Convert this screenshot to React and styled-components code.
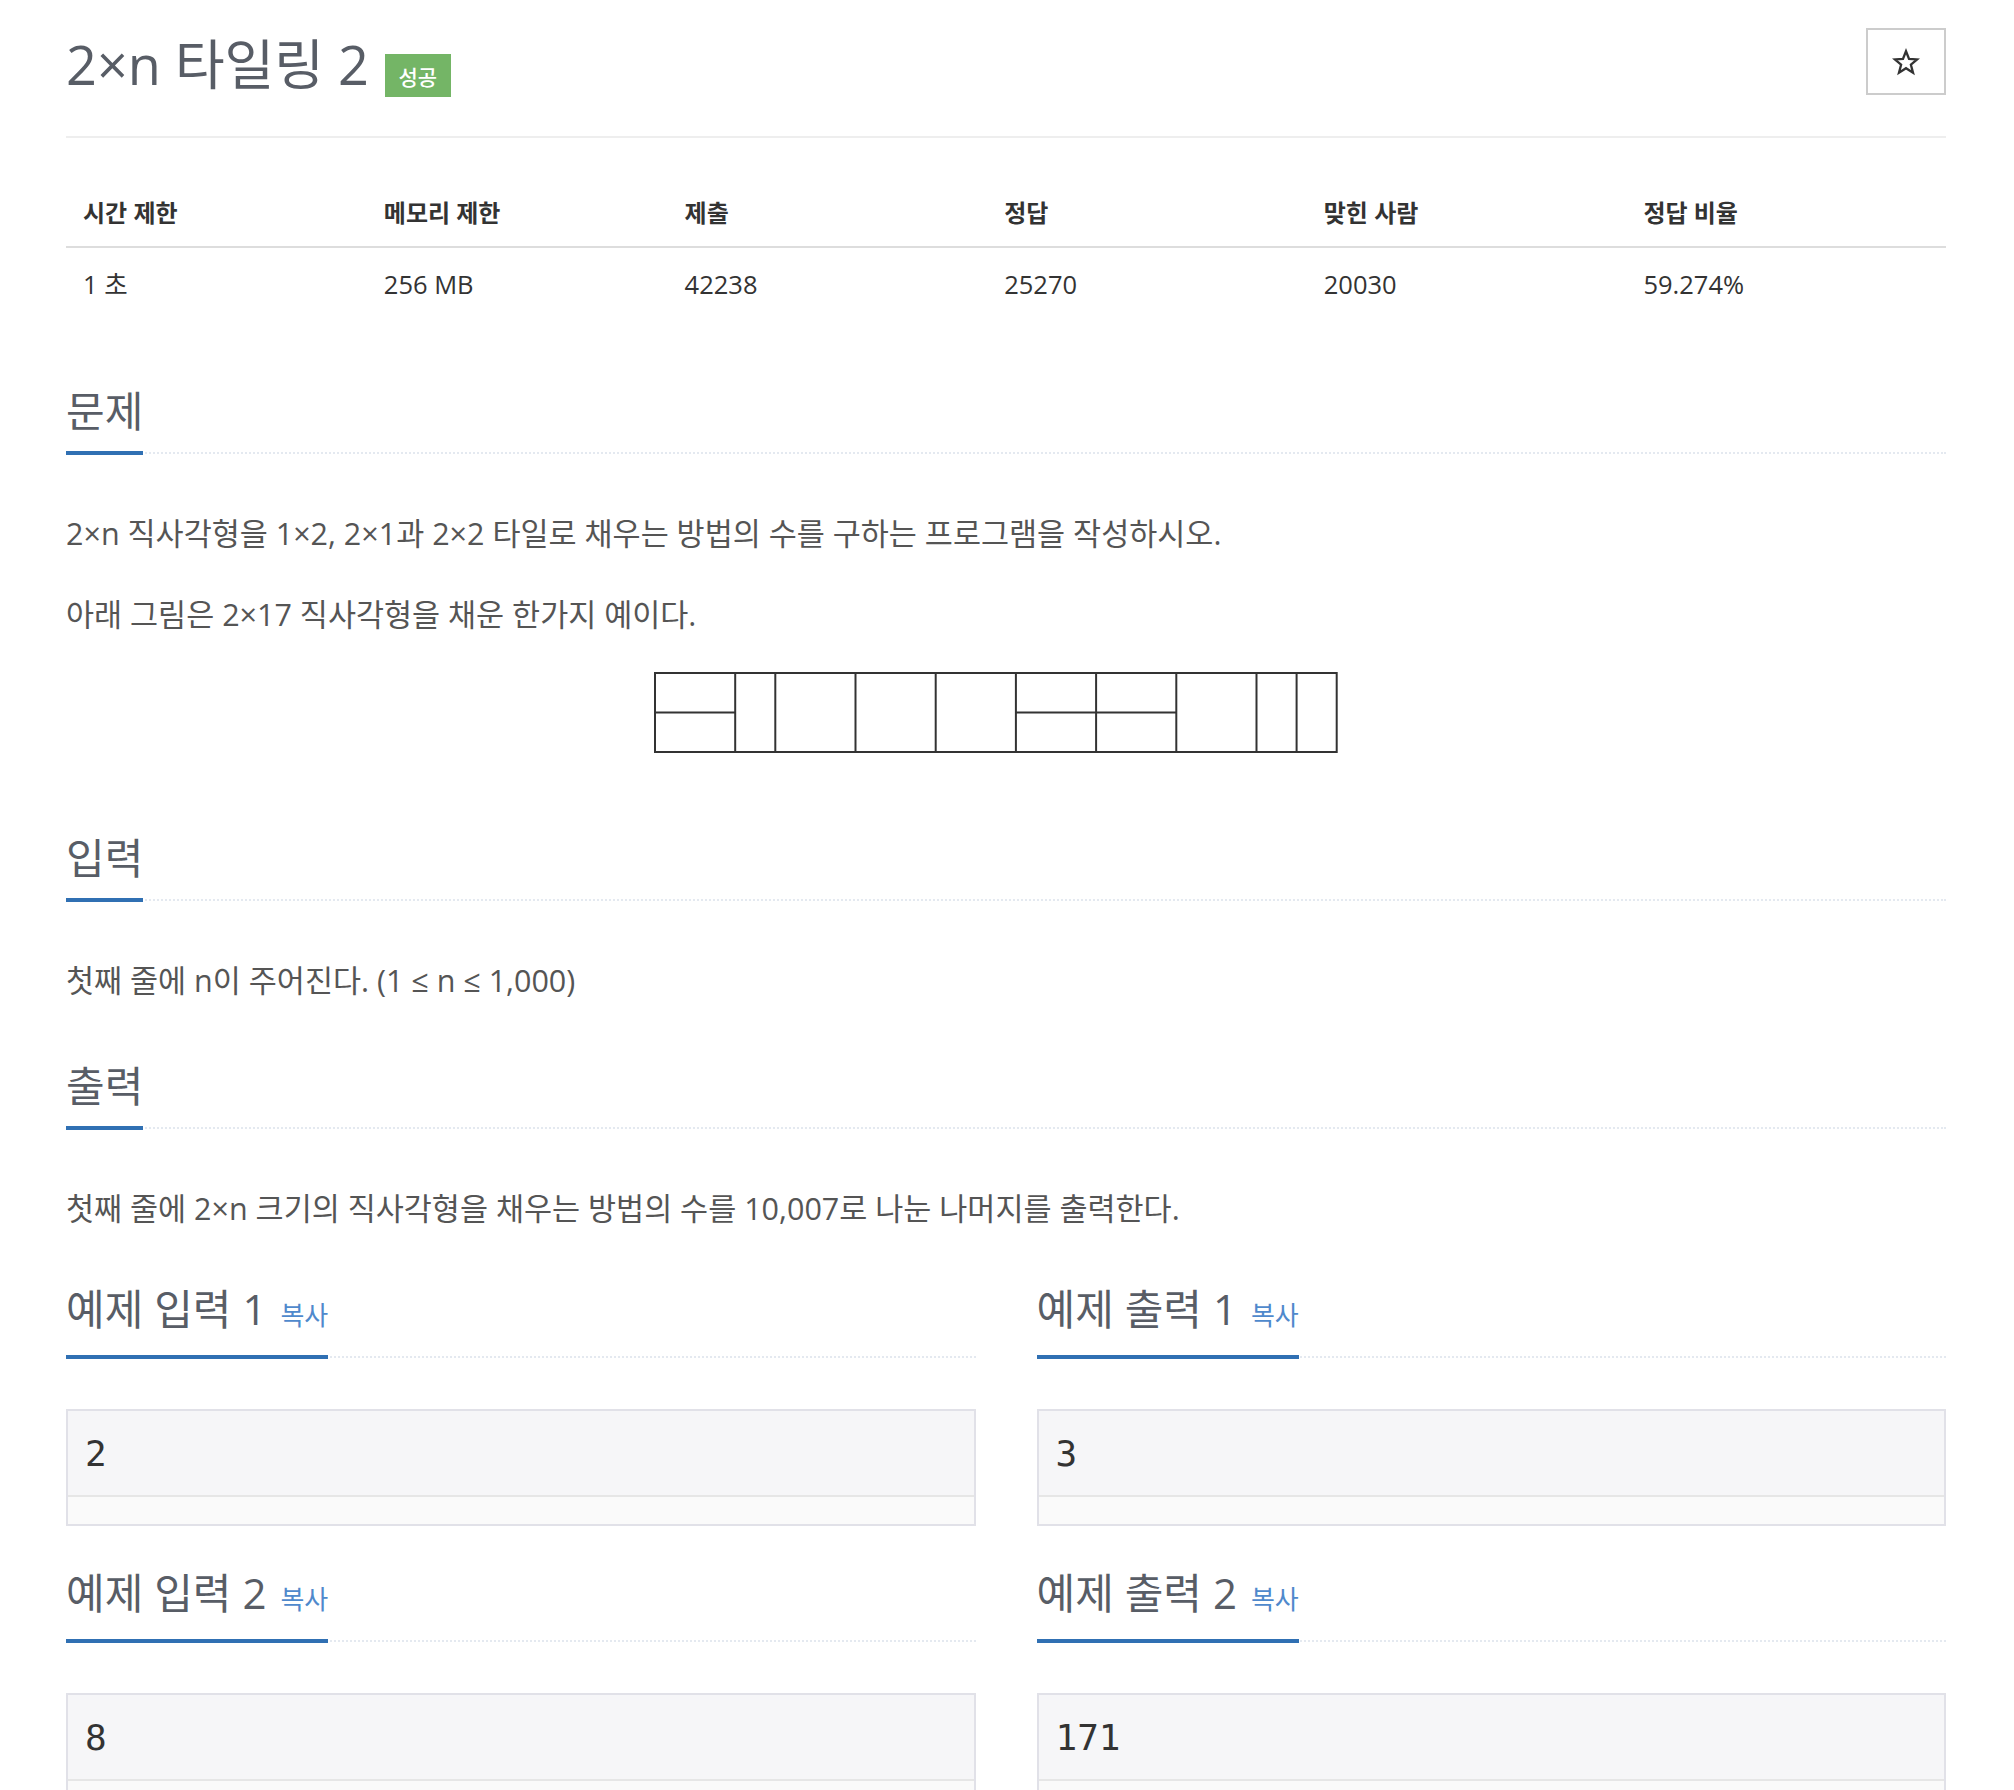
import React from 'react'
import styled, { createGlobalStyle } from 'styled-components'

const GlobalStyle = createGlobalStyle`
  body {
    margin: 0;
    background: #fff;
    font-family: "Open Sans", "Noto Sans CJK KR", sans-serif;
    color: #555;
  }
`

const Page = styled.div`
  padding: 0 68px 0 66px;
`

const Header = styled.div`
  display: flex;
  align-items: flex-start;
  justify-content: space-between;
  padding-top: 28px;
  height: 108px;
  border-bottom: 2px solid #eee;
`

const TitleRow = styled.div`
  display: flex;
  align-items: flex-end;
  gap: 16px;
  height: 68px;
`

const Title = styled.h1`
  margin: 0;
  font-size: 54px;
  font-weight: 400;
  line-height: 68px;
  color: #585d66;
  transform: translateY(2px);
`

const Badge = styled.span`
  display: inline-flex;
  align-items: center;
  justify-content: center;
  width: 66px;
  height: 43px;
  margin-bottom: -28px;
  transform: translateY(-27px);
  background: #74b566;
  color: #fff;
  font-size: 21px;
  font-weight: 500;
`

const StarButton = styled.button`
  width: 80px;
  height: 67px;
  border: 2px solid #ccc;
  background: #fff;
  display: flex;
  align-items: center;
  justify-content: center;
  padding: 0;
`

const InfoTable = styled.table`
  width: 100%;
  border-collapse: collapse;
  margin-top: 42px;
`

const Th = styled.th`
  text-align: left;
  padding: 17px 17px;
  font-size: 24px;
  line-height: 32px;
  font-weight: 700;
  color: #333;
  border-bottom: 2px solid #ddd;
  width: ${props => props.w};
`

const Td = styled.td`
  padding: 18px 17px;
  font-size: 25.5px;
  line-height: 36px;
  color: #333;
`

const Headline = styled.div`
  margin-top: ${props => props.top ?? 61}px;
  border-bottom: 2px dotted #e4e9f0;
  display: flex;
`

const HeadTitle = styled.h2`
  margin: 0 0 -3px;
  padding-bottom: 16px;
  font-size: 42px;
  font-weight: 400;
  line-height: 48px;
  color: #585d66;
  border-bottom: 4px solid #3070b3;
  white-space: nowrap;
`

const CopyLink = styled.a`
  margin-left: 14px;
  font-size: 26px;
  color: #4f89cc;
  text-decoration: none;
`

const Text = styled.p`
  margin: 58px 0 39px;
  font-size: 30.5px;
  line-height: 42px;
  color: #555;

  & + & {
    margin-top: 0;
  }
`

const Figure = styled.div`
  display: flex;
  justify-content: center;
  margin: -2px 0 80px;
`

const SampleGrid = styled.div`
  display: grid;
  grid-template-columns: 1fr 1fr;
  column-gap: 61px;
`

const SampleBox = styled.div`
  margin-top: 51px;
  border: 2px solid #e1e1e8;
  background: #f6f6f8;
`

const SampleData = styled.pre`
  margin: 0;
  height: 84px;
  padding: 0 17px;
  display: flex;
  align-items: center;
  font-family: "DejaVu Sans Mono", "Liberation Mono", monospace;
  font-size: 36px;
  color: #333;
`

const ScrollTrack = styled.div`
  height: 27px;
  border-top: 2px solid #e6e6e6;
  background: #fafafa;
`

const StarIcon = () => (
  <svg width="28" height="28" viewBox="0 0 24 24">
    <path
      d="M12 2.8l2.6 6.6 7 .4-5.4 4.5 1.8 6.9L12 17.3l-6 3.9 1.8-6.9-5.4-4.5 7-.4z"
      fill="none"
      stroke="#333"
      strokeWidth="2"
      strokeLinejoin="miter"
    />
  </svg>
)

// 2x17 tiling: [start, width, split]
const tiles = [
  [0, 2, true], [2, 1, false], [3, 2, false], [5, 2, false], [7, 2, false],
  [9, 2, true], [11, 2, true], [13, 2, false], [15, 1, false], [16, 1, false],
]

const TilingPicture = () => {
  const u = 40.1
  return (
    <svg width="704" height="82" viewBox="0 0 704 82">
      <g fill="none" stroke="#333" strokeWidth="2">
        <rect x="1" y="1" width={17 * u} height="79" />
        {tiles.map(([s, w, split]) => (
          <g key={s}>
            {s > 0 && <line x1={1 + s * u} y1="1" x2={1 + s * u} y2="80" />}
            {split && (
              <line x1={1 + s * u} y1="40.5" x2={1 + (s + w) * u} y2="40.5" />
            )}
          </g>
        ))}
      </g>
    </svg>
  )
}

const Section = ({ title, top, children }) => (
  <>
    <Headline top={top}>
      <HeadTitle>{title}</HeadTitle>
    </Headline>
    {children}
  </>
)

const Sample = ({ title, value, top }) => (
  <div>
    <Headline top={top}>
      <HeadTitle>
        {title}
        <CopyLink href="#">복사</CopyLink>
      </HeadTitle>
    </Headline>
    <SampleBox>
      <SampleData>{value}</SampleData>
      <ScrollTrack />
    </SampleBox>
  </div>
)

const App = () => {
  return (
    <Page>
      <GlobalStyle />
      <Header>
        <TitleRow>
          <Title>2×n 타일링 2</Title>
          <Badge>성공</Badge>
        </TitleRow>
        <StarButton>
          <StarIcon />
        </StarButton>
      </Header>

      <InfoTable>
        <thead>
          <tr>
            <Th w="16%">시간 제한</Th>
            <Th w="16%">메모리 제한</Th>
            <Th w="17%">제출</Th>
            <Th w="17%">정답</Th>
            <Th w="17%">맞힌 사람</Th>
            <Th w="17%">정답 비율</Th>
          </tr>
        </thead>
        <tbody>
          <tr>
            <Td>1 초</Td>
            <Td>256 MB</Td>
            <Td>42238</Td>
            <Td>25270</Td>
            <Td>20030</Td>
            <Td>59.274%</Td>
          </tr>
        </tbody>
      </InfoTable>

      <Section title="문제" top={67}>
        <Text>2×n 직사각형을 1×2, 2×1과 2×2 타일로 채우는 방법의 수를 구하는 프로그램을 작성하시오.</Text>
        <Text>아래 그림은 2×17 직사각형을 채운 한가지 예이다.</Text>
        <Figure>
          <TilingPicture />
        </Figure>
      </Section>

      <Section title="입력">
        <Text>첫째 줄에 n이 주어진다. (1 ≤ n ≤ 1,000)</Text>
      </Section>

      <Section title="출력">
        <Text>첫째 줄에 2×n 크기의 직사각형을 채우는 방법의 수를 10,007로 나눈 나머지를 출력한다.</Text>
      </Section>

      <SampleGrid>
        <Sample title="예제 입력 1" value="2" top={17} />
        <Sample title="예제 출력 1" value="3" top={17} />
        <Sample title="예제 입력 2" value="8" top={43} />
        <Sample title="예제 출력 2" value="171" top={43} />
      </SampleGrid>
    </Page>
  )
}

export default App
